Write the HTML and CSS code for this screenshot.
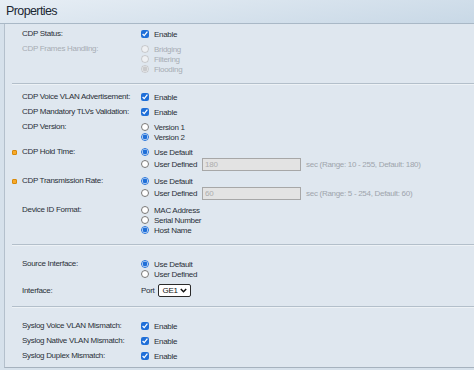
FILE: index.html
```html
<!DOCTYPE html>
<html lang="en">
<head>
<meta charset="utf-8">
<title>Properties</title>
<link rel="stylesheet" href="styles.css">
</head>
<body>
<header class="title-bar"><h1 class="title">Properties</h1></header>
<main class="panel">
  <section class="section s1">
    <div class="row">
      <div class="label">CDP Status:</div>
      <div class="value"><label class="opt"><input type="checkbox" checked><span>Enable</span></label></div>
    </div>
    <div class="row disabled">
      <div class="label">CDP Frames Handling:</div>
      <div class="value">
        <label class="opt"><input type="radio" name="fh" disabled><span>Bridging</span></label>
        <label class="opt"><input type="radio" name="fh" disabled><span>Filtering</span></label>
        <label class="opt"><input type="radio" name="fh" checked disabled><span>Flooding</span></label>
      </div>
    </div>
  </section>
  <div class="sep"></div>
  <section class="section s2">
    <div class="row">
      <div class="label">CDP Voice VLAN Advertisement:</div>
      <div class="value"><label class="opt"><input type="checkbox" checked><span>Enable</span></label></div>
    </div>
    <div class="row">
      <div class="label">CDP Mandatory TLVs Validation:</div>
      <div class="value"><label class="opt"><input type="checkbox" checked><span>Enable</span></label></div>
    </div>
    <div class="row">
      <div class="label">CDP Version:</div>
      <div class="value">
        <label class="opt"><input type="radio" name="ver"><span>Version 1</span></label>
        <label class="opt"><input type="radio" name="ver" checked><span>Version 2</span></label>
      </div>
    </div>
    <div class="row">
      <div class="label"><span class="marker"></span>CDP Hold Time:</div>
      <div class="value">
        <label class="opt"><input type="radio" name="hold" checked><span>Use Default</span></label>
        <div class="opt opt-field"><input type="radio" name="hold"><span>User Defined</span><input class="field" type="text" value="180" disabled><span class="hint">sec (Range: 10 - 255, Default: 180)</span></div>
      </div>
    </div>
    <div class="row">
      <div class="label"><span class="marker"></span>CDP Transmission Rate:</div>
      <div class="value">
        <label class="opt"><input type="radio" name="rate" checked><span>Use Default</span></label>
        <div class="opt opt-field"><input type="radio" name="rate"><span>User Defined</span><input class="field" type="text" value="60" disabled><span class="hint">sec (Range: 5 - 254, Default: 60)</span></div>
      </div>
    </div>
    <div class="row">
      <div class="label">Device ID Format:</div>
      <div class="value">
        <label class="opt"><input type="radio" name="dev"><span>MAC Address</span></label>
        <label class="opt"><input type="radio" name="dev"><span>Serial Number</span></label>
        <label class="opt"><input type="radio" name="dev" checked><span>Host Name</span></label>
      </div>
    </div>
  </section>
  <div class="sep"></div>
  <section class="section s3">
    <div class="row">
      <div class="label">Source Interface:</div>
      <div class="value">
        <label class="opt"><input type="radio" name="src" checked><span>Use Default</span></label>
        <label class="opt"><input type="radio" name="src"><span>User Defined</span></label>
      </div>
    </div>
    <div class="row row-center">
      <div class="label">Interface:</div>
      <div class="value">
        <div class="port"><span>Port</span>
          <div class="select"><span>GE1</span><svg width="7" height="5" viewBox="0 0 7 5"><path d="M0.8 1 L3.5 3.7 L6.2 1" fill="none" stroke="#111" stroke-width="1.5"/></svg></div>
        </div>
      </div>
    </div>
  </section>
  <div class="sep"></div>
  <section class="section s4">
    <div class="row">
      <div class="label">Syslog Voice VLAN Mismatch:</div>
      <div class="value"><label class="opt"><input type="checkbox" checked><span>Enable</span></label></div>
    </div>
    <div class="row">
      <div class="label">Syslog Native VLAN Mismatch:</div>
      <div class="value"><label class="opt"><input type="checkbox" checked><span>Enable</span></label></div>
    </div>
    <div class="row">
      <div class="label">Syslog Duplex Mismatch:</div>
      <div class="value"><label class="opt"><input type="checkbox" checked><span>Enable</span></label></div>
    </div>
  </section>
</main>
</body>
</html>
```
FILE: styles.css
```css
html, body {
  margin: 0;
  padding: 0;
}
body {
  width: 474px;
  height: 370px;
  overflow: hidden;
  background: #d6e1eb;
  font-family: "Liberation Sans", Arial, sans-serif;
  font-size: 8px;
  letter-spacing: -0.3px;
  color: #2a3038;
}
.title-bar {
  height: 23px;
  box-sizing: border-box;
  border-bottom: 1px solid #a9b8c6;
  background: linear-gradient(172deg, #e7eef5 0%, #d9e4ee 45%, #c8d8e6 100%);
  display: flex;
  align-items: center;
  padding-left: 6px;
}
.title-bar {
  height: 24px;
}
.title {
  margin: 0;
  font-size: 12.5px;
  font-weight: normal;
  letter-spacing: -0.6px;
  line-height: 1;
  color: #1c2733;
}
.panel {
  margin-left: 4px;
  border-left: 1px solid #b4c0cc;
  border-bottom: 1px solid #a6b2be;
  background: #dfe7ef;
}
.section {
  display: flex;
  flex-direction: column;
  gap: 5px;
  padding: 9px 0 9px 17px;
}
.s1 { padding-top: 5px; }
.s2 { padding-top: 7px; }
.s3 { padding-top: 13px; }
.s4 { padding-top: 13px; padding-bottom: 6px; }
.sep {
  margin-left: 7px;
  border-top: 1px solid #b3bfca;
  border-bottom: 1px solid #edf2f6;
}
.row {
  display: grid;
  grid-template-columns: 118px auto;
  align-items: start;
}
.row-center { align-items: center; }
.label {
  display: flex;
  align-items: center;
  line-height: 10px;
  white-space: nowrap;
}
.value {
  display: flex;
  flex-direction: column;
}
.opt {
  display: flex;
  align-items: center;
  height: 10px;
  gap: 5px;
  white-space: nowrap;
}
.opt-field { height: 14px; }
.opt input[type="checkbox"],
.opt input[type="radio"] {
  width: 8px;
  height: 8px;
  margin: 0 0 0 1px;
  accent-color: #1f6fd8;
  flex: none;
}
.disabled .label,
.disabled .opt span {
  color: #a7adb4;
}
.field {
  width: 99px;
  height: 13px;
  box-sizing: border-box;
  border: 1px solid #a7a7a7;
  background: #e3e3e3;
  color: #adadad;
  font: inherit;
  letter-spacing: inherit;
  padding: 0 2px;
  margin: 0 0 0 0;
}
.hint {
  color: #9ea5ad;
}
.marker {
  width: 3px;
  height: 3px;
  border: 1px solid #d88a0a;
  background: #f7a92a;
  border-radius: 1px;
  margin-left: -10px;
  margin-right: 5px;
  flex: none;
}
.port {
  display: flex;
  align-items: center;
  gap: 4px;
  margin-left: 1px;
}
.select {
  width: 33px;
  height: 13px;
  box-sizing: border-box;
  border: 1px solid #2a2a2a;
  border-radius: 2px;
  background: #fff;
  color: #111;
  display: flex;
  align-items: center;
  justify-content: space-between;
  padding: 0 3px 0 3px;
}
.select svg { display: block; }
```
